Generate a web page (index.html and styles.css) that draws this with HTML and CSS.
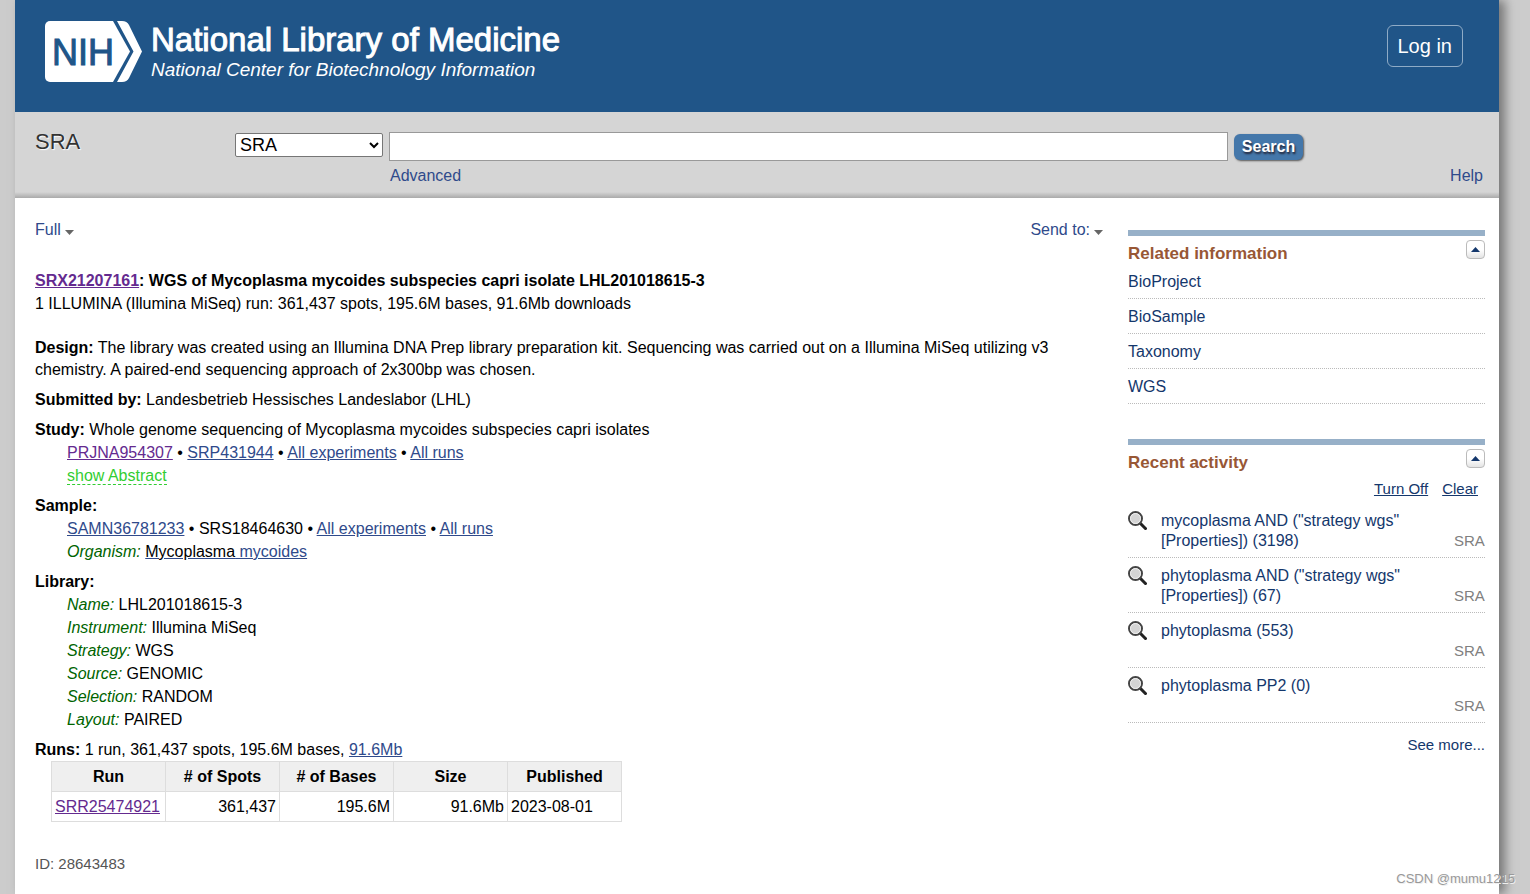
FILE: index.html
```
<!DOCTYPE html>
<html lang="en">
<head>
    <meta charset="UTF-8">
    <meta name="viewport" content="width=device-width, initial-scale=1.0">
    <title>WGS of Mycoplasma mycoides subspecies capri isolate - SRA - NCBI</title>
    <link rel="stylesheet" href="styles.css">
</head>
<body>
    <div class="page">
        <!-- Top banner -->
        <header class="banner">
            <a class="logo" href="#">
                <svg class="logo-mark" viewBox="0 0 97 61" aria-hidden="true">
                    <path fill="#fff" d="M5 0H68L85 30.5 68 61H5a5 5 0 0 1-5-5V5a5 5 0 0 1 5-5z"/>
                    <path fill="#fff" d="M72 0h5q5 0 7 4L97 30.5 84 57q-2 4-7 4h-5L88.5 30.5z"/>
                    <text class="logo-nih" x="7" y="44">NIH</text>
                </svg>
                <span class="logo-text">
                    <span class="logo-name">National Library of Medicine</span>
                    <span class="logo-center">National Center for Biotechnology Information</span>
                </span>
            </a>
            <button class="login" type="button">Log in</button>
        </header>

        <!-- Search bar -->
        <form class="search" onsubmit="return false">
            <h1 class="search-title">SRA</h1>
            <select class="search-db" aria-label="Database">
                <option>SRA</option>
            </select>
            <input class="search-term" type="text" aria-label="Search term">
            <button class="search-button" type="submit">Search</button>
            <a class="search-advanced" href="#">Advanced</a>
            <a class="search-help" href="#">Help</a>
        </form>

        <div class="content">
            <main class="main">
                <div class="display-bar">
                    <a href="#">Full<svg class="caret" viewBox="0 0 9 5" aria-hidden="true"><path d="M0 0h9L4.5 5z"/></svg></a>
                    <a href="#">Send to:<svg class="caret" viewBox="0 0 9 5" aria-hidden="true"><path d="M0 0h9L4.5 5z"/></svg></a>
                </div>

                <p class="record-title"><a class="visited" href="#">SRX21207161</a>: WGS of Mycoplasma mycoides subspecies capri isolate LHL201018615-3</p>
                <p class="record-summary">1 ILLUMINA (Illumina MiSeq) run: 361,437 spots, 195.6M bases, 91.6Mb downloads</p>

                <div class="field"><b>Design:</b> The library was created using an Illumina DNA Prep library preparation kit. Sequencing was carried out on a Illumina MiSeq utilizing v3 chemistry. A paired-end sequencing approach of 2x300bp was chosen.</div>
                <div class="field"><b>Submitted by:</b> Landesbetrieb Hessisches Landeslabor (LHL)</div>
                <div class="field"><b>Study:</b> Whole genome sequencing of Mycoplasma mycoides subspecies capri isolates
                    <div class="sub"><a class="visited" href="#">PRJNA954307</a> • <a href="#">SRP431944</a> • <a href="#">All experiments</a> • <a href="#">All runs</a></div>
                    <div class="sub"><a class="show-abstract" href="#">show Abstract</a></div>
                </div>
                <div class="field"><b>Sample:</b>
                    <div class="sub"><a href="#">SAMN36781233</a> • SRS18464630 • <a href="#">All experiments</a> • <a href="#">All runs</a></div>
                    <div class="sub"><i>Organism:</i> <a href="#"><span class="genus">Mycoplasma</span> mycoides</a></div>
                </div>
                <div class="field"><b>Library:</b>
                    <div class="sub"><i>Name:</i> LHL201018615-3</div>
                    <div class="sub"><i>Instrument:</i> Illumina MiSeq</div>
                    <div class="sub"><i>Strategy:</i> WGS</div>
                    <div class="sub"><i>Source:</i> GENOMIC</div>
                    <div class="sub"><i>Selection:</i> RANDOM</div>
                    <div class="sub"><i>Layout:</i> PAIRED</div>
                </div>
                <div class="field"><b>Runs:</b> 1 run, 361,437 spots, 195.6M bases, <a href="#">91.6Mb</a>
                    <table class="runs">
                        <thead>
                            <tr><th>Run</th><th># of Spots</th><th># of Bases</th><th>Size</th><th>Published</th></tr>
                        </thead>
                        <tbody>
                            <tr>
                                <td><a class="visited" href="#">SRR25474921</a></td>
                                <td class="num">361,437</td>
                                <td class="num">195.6M</td>
                                <td class="num">91.6Mb</td>
                                <td>2023-08-01</td>
                            </tr>
                        </tbody>
                    </table>
                </div>
                <p class="record-id">ID: 28643483</p>
            </main>

            <!-- Right column -->
            <aside class="sidebar">
                <section class="portlet">
                    <div class="portlet-head">
                        <h2>Related information</h2>
                        <button class="toggle" type="button" aria-label="Collapse related information"><svg viewBox="0 0 9 5" aria-hidden="true"><path d="M0 5h9L4.5 0z"/></svg></button>
                    </div>
                    <ul class="related">
                        <li><a href="#">BioProject</a></li>
                        <li><a href="#">BioSample</a></li>
                        <li><a href="#">Taxonomy</a></li>
                        <li><a href="#">WGS</a></li>
                    </ul>
                </section>

                <section class="portlet">
                    <div class="portlet-head">
                        <h2>Recent activity</h2>
                        <button class="toggle" type="button" aria-label="Collapse recent activity"><svg viewBox="0 0 9 5" aria-hidden="true"><path d="M0 5h9L4.5 0z"/></svg></button>
                    </div>
                    <div class="activity-links"><a href="#">Turn Off</a><a href="#">Clear</a></div>

                    <svg class="defs" aria-hidden="true">
                        <symbol id="magnifier" viewBox="0 0 19 19">
                            <path d="M11.5 11.5L17.5 17.5" stroke="#222" stroke-width="3" stroke-linecap="square"/>
                            <circle cx="7.5" cy="7.5" r="6.5" fill="#d4d4d4" stroke="#444" stroke-width="2"/>
                            <circle cx="7.5" cy="7.5" r="5" fill="none" stroke="#f0f0f0"/>
                        </symbol>
                    </svg>
                    <ul class="activity">
                        <li>
                            <svg class="magnifier" aria-hidden="true"><use href="#magnifier"/></svg>
                            <a href="#">mycoplasma AND ("strategy wgs"[Properties]) (3198)</a>
                            <span class="db">SRA</span>
                        </li>
                        <li>
                            <svg class="magnifier" aria-hidden="true"><use href="#magnifier"/></svg>
                            <a href="#">phytoplasma AND ("strategy wgs"[Properties]) (67)</a>
                            <span class="db">SRA</span>
                        </li>
                        <li>
                            <svg class="magnifier" aria-hidden="true"><use href="#magnifier"/></svg>
                            <a href="#">phytoplasma (553)</a>
                            <span class="db">SRA</span>
                        </li>
                        <li>
                            <svg class="magnifier" aria-hidden="true"><use href="#magnifier"/></svg>
                            <a href="#">phytoplasma PP2 (0)</a>
                            <span class="db">SRA</span>
                        </li>
                    </ul>
                    <a class="see-more" href="#">See more...</a>
                </section>
            </aside>
        </div>
    </div>
    <div class="watermark">CSDN @mumu1215</div>
</body>
</html>
```
FILE: styles.css
```
/* General styling */
* {
    box-sizing: border-box;
}

body {
    margin: 0;
    background-color: #ccc;
    color: #000;
    font-family: "Liberation Sans", Arial, sans-serif;
    font-size: 16px;
    line-height: 22px;
}

p, h1, h2, ul {
    margin: 0;
    padding: 0;
}

ul {
    list-style: none;
}

a {
    color: #2f4a8b;
}

a.visited {
    color: #642a8f;
}

.page {
    min-height: 100vh;
    margin: 0 31px 0 15px;
    background-color: #fff;
    box-shadow: 6px 0 10px #777;
}

/* Top banner */
.banner {
    display: flex;
    justify-content: space-between;
    align-items: flex-start;
    height: 112px;
    padding: 21px 36px 0 30px;
    background-color: #205588;
}

.logo {
    display: flex;
    gap: 9px;
    color: #fff;
    text-decoration: none;
}

.logo-mark {
    width: 97px;
    height: 61px;
}

.logo-nih {
    fill: #205588;
    stroke: #205588;
    font-family: "Liberation Sans Narrow", "Liberation Sans", Arial, sans-serif;
    font-size: 36px;
}

.logo-name {
    display: block;
    font-size: 33px;
    line-height: 38px;
    -webkit-text-stroke: 1px #fff;
}

.logo-center {
    display: block;
    font-size: 19px;
    font-style: italic;
    line-height: 22px;
}

.login {
    height: 42px;
    margin-top: 4px;
    padding: 0 10px;
    border: 1px solid #8fabc6;
    border-radius: 6px;
    background: none;
    color: #fff;
    font-family: inherit;
    font-size: 20px;
}

/* Search bar */
.search {
    display: grid;
    grid-template-columns: 194px 148px 1fr 69px 174px;
    grid-template-rows: 29px 29px;
    column-gap: 6px;
    align-items: center;
    height: 86px;
    padding: 20px 16px 0 20px;
    background: linear-gradient(#d5d5d5 80px, #aaa);
}

.search-title {
    align-self: start;
    color: #333;
    font-size: 22px;
    font-weight: normal;
    line-height: 20px;
    text-shadow: 1px 1px 1px #fff;
}

.search-db {
    height: 24px;
    margin-bottom: 3px;
    border: 1px solid #767676;
    border-radius: 2px;
    background-color: #fff;
    font-family: inherit;
    font-size: 18px;
}

.search-term {
    width: 100%;
    height: 29px;
    border: 1px solid #999;
    font-family: inherit;
    font-size: 16px;
}

.search-button {
    height: 26px;
    padding: 0;
    border: 0;
    border-radius: 6px;
    background-color: #4477aa;
    box-shadow: 1px 1px 2px #555;
    color: #fff;
    font-family: inherit;
    font-size: 16px;
    font-weight: bold;
    text-shadow: 1px 2px 2px #223;
}

.search-advanced, .search-help {
    text-decoration: none;
}

.search-advanced {
    grid-column: 3;
    padding-left: 1px;
}

.search-help {
    grid-column: 5;
    justify-self: end;
}

/* Page content */
.content {
    display: flex;
    gap: 25px;
    padding: 20px 14px 0 20px;
}

.main {
    flex: 1;
    padding-top: 1px;
}

.display-bar {
    display: flex;
    justify-content: space-between;
    margin-bottom: 29px;
}

.display-bar a {
    text-decoration: none;
}

.caret {
    width: 9px;
    height: 5px;
    margin-left: 4px;
    fill: #666;
}

.record-title {
    margin-bottom: 1px;
    font-weight: bold;
}

.record-summary {
    margin-bottom: 22px;
}

.field {
    margin-bottom: 8px;
}

.sub {
    padding-left: 32px;
    line-height: 23px;
}

.sub i {
    color: #006400;
}

.show-abstract {
    border-bottom: 1px dashed #32cd32;
    color: #32cd32;
    text-decoration: none;
}

.genus {
    color: #000;
}

.runs {
    width: 571px;
    margin-left: 16px;
    border-collapse: collapse;
    table-layout: fixed;
}

.runs th, .runs td {
    height: 30px;
    padding: 0 3px;
    border: 1px solid #ddd;
}

.runs th {
    background-color: #efefef;
}

.runs .num {
    text-align: right;
}

.record-id {
    margin-top: 31px;
    color: #555;
    font-size: 15px;
}

/* Right column */
.sidebar {
    flex: 0 0 357px;
    padding-top: 12px;
}

.sidebar a {
    color: #14376c;
    text-decoration: none;
}

.portlet {
    margin-bottom: 35px;
}

.portlet-head {
    display: flex;
    justify-content: space-between;
    align-items: flex-start;
    height: 34px;
    padding-top: 4px;
    border-top: 6px solid #97b0c8;
}

.portlet h2 {
    padding-top: 3px;
    color: #985735;
    font-size: 17px;
    line-height: 22px;
}

.toggle {
    display: flex;
    justify-content: center;
    align-items: center;
    width: 19px;
    height: 19px;
    padding: 0;
    border: 1px solid #bbb;
    border-radius: 4px;
    background: linear-gradient(#fff 50%, #e4e4e4);
}

.toggle svg {
    width: 9px;
    height: 5px;
    fill: #14376c;
}

.related li {
    height: 35px;
    padding-top: 7px;
    border-bottom: 1px dotted #bbb;
}

.activity-links {
    display: flex;
    justify-content: flex-end;
    gap: 14px;
    padding: 5px 7px 3px 0;
    font-size: 15px;
}

.sidebar .activity-links a {
    text-decoration: underline;
}

.defs {
    display: none;
}

.activity li {
    display: grid;
    grid-template-columns: 19px 1fr 31px;
    column-gap: 14px;
    height: 55px;
    padding-top: 8px;
    border-bottom: 1px dotted #bbb;
    line-height: 20px;
}

.activity a {
    max-width: 250px;
    overflow-wrap: anywhere;
}

.magnifier {
    width: 19px;
    height: 19px;
}

.db {
    padding-top: 20px;
    color: #808080;
    font-size: 15px;
}

.see-more {
    display: block;
    margin-top: 11px;
    font-size: 15px;
    text-align: right;
}

.watermark {
    position: absolute;
    right: 15px;
    bottom: 4px;
    color: #999;
    font-size: 13px;
    text-shadow: 1px 1px 0 #eee;
}
```
